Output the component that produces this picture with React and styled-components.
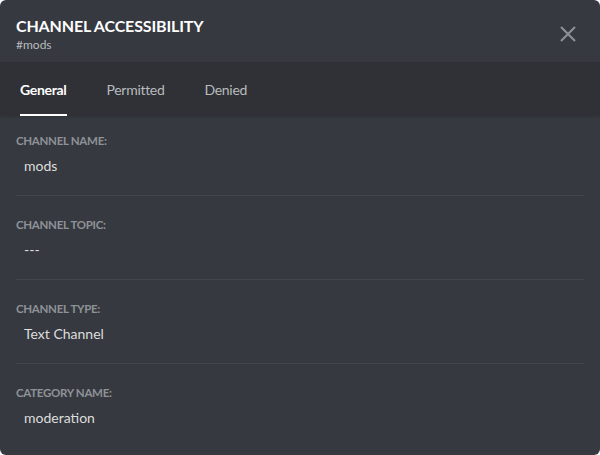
import { useState } from 'react';
import styled, { createGlobalStyle } from 'styled-components';

const fields = [
  { label: 'Channel Name:', value: 'mods' },
  { label: 'Channel Topic:', value: '---' },
  { label: 'Channel Type:', value: 'Text Channel' },
  { label: 'Category Name:', value: 'moderation' },
];

const tabs = ['General', 'Permitted', 'Denied'];

const App = () => {
  const [active, setActive] = useState('General');

  return (
    <>
      <GlobalStyle />
      <Modal>
        <Header>
          <div>
            <Title>Channel Accessibility</Title>
            <Subtitle>#mods</Subtitle>
          </div>
          <CloseButton aria-label="Close">
            <svg width="16" height="16" viewBox="0 0 16 16">
              <path
                d="M1 1L15 15M15 1L1 15"
                stroke="currentColor"
                strokeWidth="2"
                fill="none"
              />
            </svg>
          </CloseButton>
        </Header>

        {/* TABS */}
        <TabBar>
          {tabs.map((tab) => (
            <Tab
              key={tab}
              $active={active === tab}
              onClick={() => setActive(tab)}
            >
              {tab}
            </Tab>
          ))}
        </TabBar>

        {/* FIELDS */}
        <Body>
          {fields.map((field) => (
            <Field key={field.label}>
              <Label>{field.label}</Label>
              <Value>{field.value}</Value>
            </Field>
          ))}
        </Body>
      </Modal>
    </>
  );
};

const GlobalStyle = createGlobalStyle`
  html, body {
    margin: 0;
    padding: 0;
    background: #ffffff;
  }
  * {
    box-sizing: border-box;
  }
`;

const Modal = styled.div`
  width: 600px;
  height: 455px;
  border-radius: 6px;
  overflow: hidden;
  background: #36393f;
  font-family: Lato, 'Open Sans', sans-serif;
  display: flex;
  flex-direction: column;
`;

const Header = styled.header`
  height: 62px;
  padding: 16px 16px 0 16px;
  display: flex;
  justify-content: space-between;
  align-items: flex-start;
`;

const Title = styled.h2`
  margin: 0;
  font-size: 16px;
  line-height: 20px;
  font-weight: 700;
  text-transform: uppercase;
  color: #ffffff;
  letter-spacing: -0.15px;
`;

const Subtitle = styled.div`
  margin-top: 1px;
  font-size: 12px;
  line-height: 16px;
  color: #b9bbbe;
`;

const CloseButton = styled.button`
  margin: 10px 8px 0 0;
  padding: 0;
  background: transparent;
  border: none;
  color: #8e9297;
  cursor: pointer;
  display: flex;
`;

const TabBar = styled.nav`
  height: 54px;
  background: #2f3136;
  padding: 0 20px;
  display: flex;
  gap: 40px;
  box-shadow: 0 1px 2px rgba(0, 0, 0, 0.12);
  position: relative;
`;

const Tab = styled.button`
  background: transparent;
  border: none;
  padding: 0;
  height: 54px;
  font-family: inherit;
  font-size: 14px;
  letter-spacing: -0.3px;
  font-weight: ${(props) => (props.$active ? 700 : 400)};
  color: ${(props) => (props.$active ? '#ffffff' : '#b9bbbe')};
  border-bottom: 2px solid
    ${(props) => (props.$active ? '#ffffff' : 'transparent')};
  border-top: 2px solid transparent;
  cursor: pointer;
`;

const Body = styled.div`
  padding: 17px 16px 0 16px;
`;

const Field = styled.div`
  padding: 21px 0 19px;
  border-bottom: 1px solid #43464c;
  &:first-child {
    padding-top: 0;
  }
  &:last-child {
    border-bottom: none;
  }
`;

const Label = styled.div`
  font-size: 11.5px;
  line-height: 16px;
  font-weight: 700;
  letter-spacing: -0.3px;
  text-transform: uppercase;
  color: #8e9297;
`;

const Value = styled.div`
  margin-top: 7px;
  padding-left: 8px;
  font-size: 14px;
  line-height: 20px;
  color: #dcddde;
`;

export default App;
